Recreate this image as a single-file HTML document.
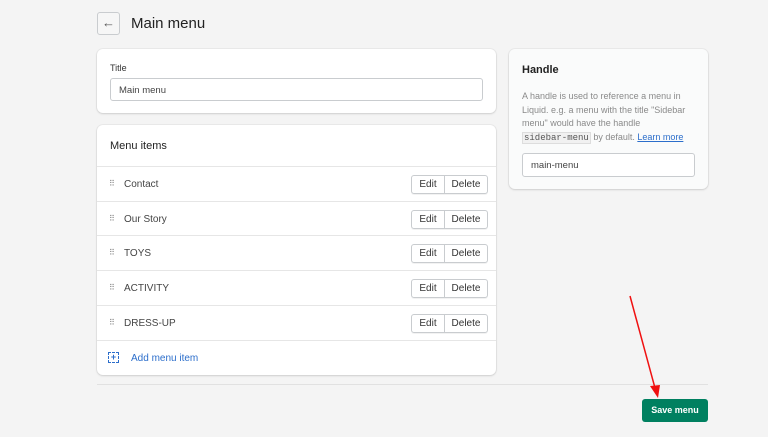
<!DOCTYPE html>
<html><head><style>
*{box-sizing:border-box;margin:0;padding:0}
body{width:768px;height:437px;background:#f4f4f4;font-family:"Liberation Sans",sans-serif;color:#333;position:relative;overflow:hidden;font-size:10px}
.a{position:absolute}
.card{position:absolute;background:#fff;border-radius:6px;box-shadow:0 0 0 1px rgba(0,0,0,.04),0 1px 2px rgba(0,0,0,.12)}
.row{position:absolute;left:0;right:0;height:35px;border-top:1px solid #e6e6e6}
.row .d{position:absolute;left:12px;top:12px;color:#888;font-size:8px;letter-spacing:-1px}
.row .t{position:absolute;left:27px;top:12px;font-size:10px;color:#444}
.btns{position:absolute;left:314px;top:8px;width:77px;height:19px;border:1px solid #c9cccf;border-radius:3px;display:flex;font-size:10px;color:#333;box-shadow:0 1px 0 rgba(0,0,0,.05)}
.btns span{display:flex;align-items:center;justify-content:center}
</style></head><body>
<div class="a" style="left:97px;top:12px;width:23px;height:23px;border:1px solid #c9cccf;border-radius:3px;background:#f6f6f6;text-align:center;line-height:20px;font-size:13px;color:#555">←</div>
<div class="a" style="left:131px;top:15px;font-size:15px;color:#222">Main menu</div>

<div class="card" style="left:97px;top:49px;width:399px;height:64px">
<div class="a" style="left:13px;top:14px;font-size:9px">Title</div>
<div class="a" style="left:13px;top:29px;width:373px;height:23px;border:1px solid #c9cccf;border-radius:3px;font-size:9.5px;padding:6px 8px;color:#444">Main menu</div>
</div>

<div class="card" style="left:97px;top:125px;width:399px;height:250px">
<div class="a" style="left:13px;top:15px;font-size:11px;color:#222">Menu items</div>
<div class="row" style="top:41px"><span class="d">⠿</span><span class="t">Contact</span><div class="btns"><span style="width:33px;border-right:1px solid #c9cccf">Edit</span><span style="flex:1">Delete</span></div></div>
<div class="row" style="top:76px"><span class="d">⠿</span><span class="t">Our Story</span><div class="btns"><span style="width:33px;border-right:1px solid #c9cccf">Edit</span><span style="flex:1">Delete</span></div></div>
<div class="row" style="top:110px"><span class="d">⠿</span><span class="t">TOYS</span><div class="btns"><span style="width:33px;border-right:1px solid #c9cccf">Edit</span><span style="flex:1">Delete</span></div></div>
<div class="row" style="top:145px"><span class="d">⠿</span><span class="t">ACTIVITY</span><div class="btns"><span style="width:33px;border-right:1px solid #c9cccf">Edit</span><span style="flex:1">Delete</span></div></div>
<div class="row" style="top:180px"><span class="d">⠿</span><span class="t">DRESS-UP</span><div class="btns"><span style="width:33px;border-right:1px solid #c9cccf">Edit</span><span style="flex:1">Delete</span></div></div>
<div class="row" style="top:215px;height:35px">
<div class="a" style="left:11px;top:11px;width:11px;height:11px;border:1px dashed #2c6ecb;color:#2c6ecb;font-size:9px;line-height:9px;text-align:center;font-weight:bold">+</div>
<span class="a" style="left:34px;top:12px;font-size:10px;color:#2c6ecb">Add menu item</span></div>
</div>

<div class="card" style="left:509px;top:49px;width:199px;height:140px;background:#fafbfb">
<div class="a" style="left:13px;top:15px;font-size:11px;color:#222;font-weight:bold">Handle</div>
<div class="a" style="left:13px;top:41px;width:186px;font-size:9px;line-height:13.5px;color:#8a8a8a;white-space:nowrap">A handle is used to reference a menu in<br>Liquid. e.g. a menu with the title "Sidebar<br>menu" would have the handle<br><span style="font-family:'Liberation Mono',monospace;font-size:9px;background:#f1f1f1;border:1px solid #ddd;color:#555;padding:0 1px">sidebar-menu</span> by default. <span style="color:#2c6ecb;text-decoration:underline">Learn more</span></div>
<div class="a" style="left:13px;top:104px;width:173px;height:24px;border:1px solid #c9cccf;border-radius:3px;background:#fff;font-size:9.5px;padding:6px 8px;color:#444">main-menu</div>
</div>

<div class="a" style="left:97px;top:384px;width:611px;height:1px;background:#e1e1e1"></div>
<div class="a" style="left:642px;top:399px;width:66px;height:23px;background:#008060;border-radius:3px;color:#fff;font-size:9px;font-weight:bold;text-align:center;line-height:23px">Save menu</div>
<svg class="a" style="left:0;top:0" width="768" height="437"><line x1="630" y1="296" x2="655" y2="388" stroke="#f01010" stroke-width="1.5"/><polygon points="650,386 660,385 658,398" fill="#f01010"/></svg>
</body></html>
